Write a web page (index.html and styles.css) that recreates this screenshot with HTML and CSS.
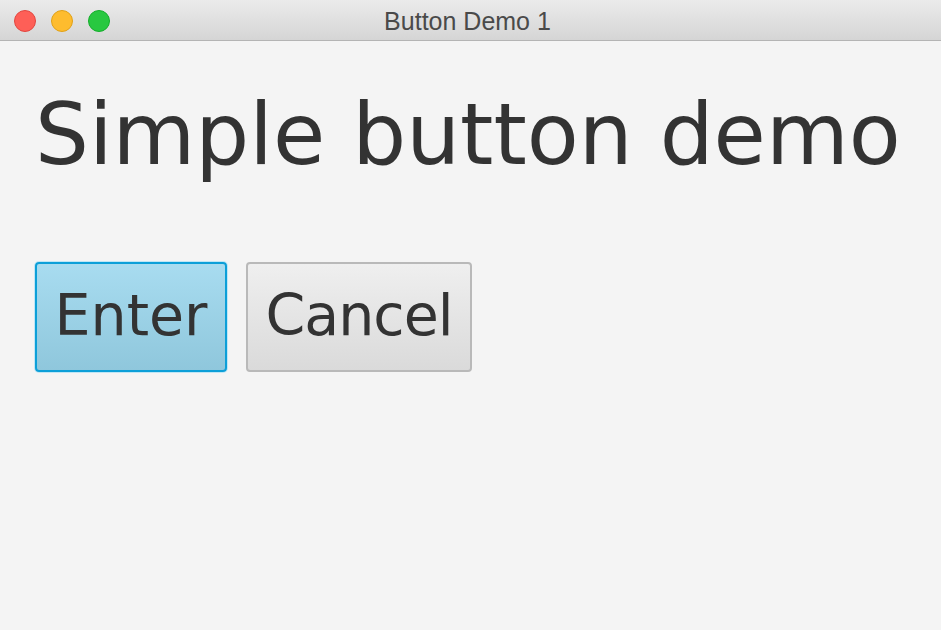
FILE: index.html
```html
<!DOCTYPE html>
<html>
<head>
    <meta charset="utf-8" />
    <title>Button Demo 1</title>
<link rel="stylesheet" href="styles.css">
</head>
<body>
<div class="window">
    <!-- title bar -->
    <div class="titlebar">
        <div class="lights">
            <span class="light red"></span>
            <span class="light yellow"></span>
            <span class="light green"></span>
        </div>
        <div class="title">Button Demo 1</div>
    </div>
    <!-- content -->
    <div class="content">
        <p class="header">Simple button demo</p>
        <div class="buttons">
            <button class="btn default">Enter</button>
            <button class="btn cancel">Cancel</button>
        </div>
    </div>
</div>
</body>
</html>
```
FILE: styles.css
```css
body {
    margin: 0;
    background: #f4f4f4;
    font-family: "DejaVu Sans", Verdana, sans-serif;
}

.window {
    width: 941px;
    height: 630px;
    overflow: hidden;
}

/* title bar */
.titlebar {
    position: relative;
    height: 40px;
    background: linear-gradient(#ebebeb, #d5d5d5);
    border-bottom: 1px solid #b4b4b4;
    display: flex;
    align-items: center;
    justify-content: center;
}

.lights {
    position: absolute;
    left: 14px;
    top: 10px;
    display: flex;
    gap: 15px;
}

.light {
    width: 22px;
    height: 22px;
    border-radius: 50%;
    box-sizing: border-box;
}
.red { background: #fe5f57; border: 1px solid #e2463f; }
.yellow { background: #febc2e; border: 1px solid #e1a116; }
.green { background: #28c840; border: 1px solid #14ae2b; }

.title {
    font-family: "Liberation Sans", Arial, sans-serif;
    font-size: 25px;
    color: #4a4a4a;
    margin-left: -6px;
    margin-top: 2px;
}

/* content */
.content {
    padding: 0 35px;
}

.header {
    margin: 44px 0 0 0;
    font-size: 85px;
    line-height: 100px;
    color: #333333;
}

.buttons {
    display: flex;
    gap: 19px;
    margin-top: 77px;
}

.btn {
    font-family: "DejaVu Sans", Verdana, sans-serif;
    font-size: 57px;
    color: #333333;
    height: 110px;
    padding: 0 0 5px 0;
    text-align: center;
    border: 2px solid #b9b9b9;
    border-radius: 4px;
    background: linear-gradient(#efefef, #dadada);
}

.btn.default {
    width: 192px;
    border-color: #0c9fd8;
    background: linear-gradient(#a8dcf0, #8fc7dc);
    box-shadow: 0 0 0 1px #bfe6f5;
}

.btn.cancel {
    width: 226px;
    letter-spacing: -1px;
}
```
